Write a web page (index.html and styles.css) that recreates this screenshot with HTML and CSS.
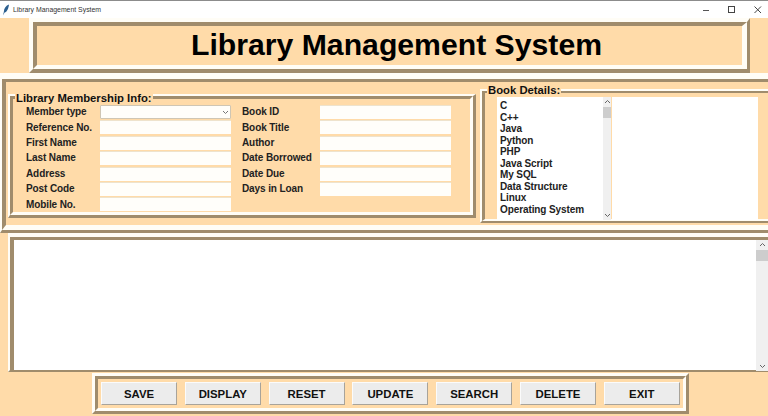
FILE: index.html
```html
<!DOCTYPE html>
<html lang="en">
<head>
<meta charset="utf-8">
<title>Library Management System</title>
<link rel="stylesheet" href="styles.css">
</head>
<body>
<div class="window">
  <div class="titlebar">
    <svg class="feather" width="8" height="12" viewBox="0 0 8 12"><path d="M7 0.5C4 1.5 2 4 1.8 8L1 11.5L2.6 8.6C5 8 6.6 4.5 7 0.5Z" fill="#2c5f8f"/></svg>
    <span class="title-text">Library Management System</span>
    <div class="controls">
      <svg width="10" height="10" viewBox="0 0 10 10"><path d="M2 5.5H8" stroke="#555" fill="none"/></svg>
      <svg width="10" height="10" viewBox="0 0 10 10"><rect x="1.5" y="1.5" width="6" height="6" stroke="#444" fill="none"/></svg>
      <svg width="10" height="10" viewBox="0 0 10 10"><path d="M1.5 1.5L8 8M8 1.5L1.5 8" stroke="#444" fill="none"/></svg>
    </div>
  </div>

  <div class="ridge header"><div class="ridge-in header-in"><h1>Library Management System</h1></div></div>

  <div class="ridge main"><div class="ridge-in main-in">
    <div class="ridge member"><div class="ridge-in member-in">
      <span class="legend member-legend">Library Membership Info:</span>
      <div class="form">
        <label>Member type</label>
        <div class="entry combo"><svg width="7" height="5" viewBox="0 0 7 5"><path d="M1 1L3.5 3.5L6 1" stroke="#777" fill="none"/></svg></div>
        <label>Book ID</label><div class="entry"></div>
        <label>Reference No.</label><div class="entry"></div>
        <label>Book Title</label><div class="entry"></div>
        <label>First Name</label><div class="entry"></div>
        <label>Author</label><div class="entry"></div>
        <label>Last Name</label><div class="entry"></div>
        <label>Date Borrowed</label><div class="entry"></div>
        <label>Address</label><div class="entry"></div>
        <label>Date Due</label><div class="entry"></div>
        <label>Post Code</label><div class="entry"></div>
        <label>Days in Loan</label><div class="entry"></div>
        <label>Mobile No.</label><div class="entry"></div>
      </div>
    </div></div>

    <div class="ridge books"><div class="ridge-in books-in">
      <span class="legend books-legend">Book Details:</span>
      <ul class="list">
        <li>C</li><li>C++</li><li>Java</li><li>Python</li><li>PHP</li><li>Java Script</li><li>My SQL</li><li>Data Structure</li><li>Linux</li><li>Operating System</li>
      </ul>
      <div class="scroll small">
        <svg width="7" height="5" viewBox="0 0 7 5"><path d="M1 4L3.5 1.5L6 4" stroke="#666" fill="none"/></svg>
        <div class="thumb"></div>
        <svg class="down" width="7" height="5" viewBox="0 0 7 5"><path d="M1 1L3.5 3.5L6 1" stroke="#666" fill="none"/></svg>
      </div>
      <div class="detail"></div>
    </div></div>
  </div></div>

  <div class="ridge output"><div class="ridge-in output-in">
    <div class="textbox"></div>
    <div class="scroll large">
      <svg width="7" height="5" viewBox="0 0 7 5"><path d="M1 4L3.5 1.5L6 4" stroke="#666" fill="none"/></svg>
      <div class="thumb"></div>
      <svg class="down" width="7" height="5" viewBox="0 0 7 5"><path d="M1 1L3.5 3.5L6 1" stroke="#666" fill="none"/></svg>
    </div>
  </div></div>

  <div class="ridge actions"><div class="ridge-in actions-in">
    <button>SAVE</button><button>DISPLAY</button><button>RESET</button><button>UPDATE</button><button>SEARCH</button><button>DELETE</button><button>EXIT</button>
  </div></div>
</div>
</body>
</html>
```
FILE: styles.css
```css
* { box-sizing: border-box; }
html, body { margin: 0; padding: 0; }
body { width: 768px; height: 416px; overflow: hidden; background: #ffdba9; font-family: "Liberation Sans", Arial, sans-serif; color: #111; }
.window { width: 768px; height: 416px; display: flex; flex-direction: column; overflow: hidden; }

.titlebar { flex: none; height: 18px; background: #fff; border-top: 1px solid #8c8c8c; display: flex; align-items: center; padding-left: 2px; color: #333; }
.feather { margin-right: 3px; }
.title-text { font-size: 6.9px; }
.controls { margin-left: auto; display: flex; gap: 16px; padding-right: 5px; }
.controls svg { display: block; }

.ridge { border-style: solid; border-color: #fffdf6 #a08c6c #a08c6c #fffdf6; }
.ridge-in { border-style: solid; border-color: #a08c6c #fffdf6 #fffdf6 #a08c6c; height: 100%; }

.header { flex: none; margin-left: 29px; width: 721px; height: 55px; border-width: 4px 3px 4px 4px; }
.header-in { border-width: 4px 5px 4px 4px; display: flex; align-items: center; justify-content: center; padding-left: 14px; }
h1 { margin: 0; font-size: 30.2px; line-height: 1; font-weight: 700; color: #000; }

.main { flex: none; width: 790px; height: 160px; border-width: 6px 4px 3px 2px; }
.main-in { border-width: 3px 3px 5px 4px; display: flex; align-items: flex-start; padding: 0 0 0 2px; }

.member { flex: none; margin-top: 12px; width: 468px; height: 124px; border-width: 2px 3px 3px 2px; }
.member-in { border-width: 3px; position: relative; padding: 6px 0 0 13px; }
.legend { position: absolute; background: #ffdba9; font-weight: 700; font-size: 11.3px; line-height: 13px; padding: 0 1px; color: #111; }
.member-legend { left: 2px; top: -7px; }

.form { display: grid; grid-template-columns: 74px 131px 89px 131px; grid-auto-rows: 15.4px; font-size: 10px; letter-spacing: -0.1px; font-weight: 700; color: #222; }
.form label { display: flex; align-items: center; height: 13.5px; white-space: nowrap; }
.form label:nth-child(4n+3) { padding-left: 11px; }
.entry { height: 14px; background: #fffefa; border-top: 1px solid #eee3cd; }
.combo { border: 1px solid #cfc6b4; border-radius: 1px; display: flex; align-items: center; justify-content: flex-end; padding-right: 1px; }

.books { flex: none; margin: 7px 0 0 4px; width: 330px; height: 134px; border-width: 2px 0 2px 2px; }
.books-in { border-width: 2px 0 2px 3px; position: relative; display: flex; padding: 4px 0 0 12px; }
.books-legend { left: 2px; top: -9px; }
.list { flex: none; margin: 0; padding: 3px 0 0 3px; list-style: none; width: 106px; height: 123px; background: #fff; font-size: 10px; letter-spacing: -0.1px; font-weight: 700; line-height: 11.5px; color: #222; overflow: hidden; }
.list li { height: 11.5px; white-space: nowrap; }
.scroll { flex: none; background: #f0f0f0; display: flex; flex-direction: column; align-items: center; }
.scroll svg { flex: none; display: block; margin-top: 2px; }
.scroll .thumb { background: #cdcdcd; width: 100%; }
.scroll .down { margin-top: auto; margin-bottom: 2px; }
.small { width: 8px; height: 123px; }
.small .thumb { height: 11px; margin-top: 3px; }
.detail { flex: none; margin-left: 1px; width: 146px; height: 123px; background: #fff; }

.output { flex: none; margin-left: 8px; width: 790px; height: 139px; border-width: 4px 4px 2px 2px; }
.output-in { border-width: 3px 0 0 4px; display: flex; }
.textbox { flex: none; width: 742px; height: 130px; background: #fff; }
.large { width: 12px; height: 131px; }
.large .thumb { height: 11px; margin-top: 3px; }

.actions { flex: none; margin: 1px 0 0 92px; width: 597px; height: 41px; border-width: 3px; }
.actions-in { border-width: 3px; display: flex; gap: 7.8px; padding: 3px 0 0 3px; }
button { flex: none; width: 76px; height: 23px; padding: 0; background: #ececec; border: 1px solid; border-color: #fbfbfb #a8a39a #a8a39a #fbfbfb; font: 700 11.4px "Liberation Sans", Arial, sans-serif; color: #111; }
```
